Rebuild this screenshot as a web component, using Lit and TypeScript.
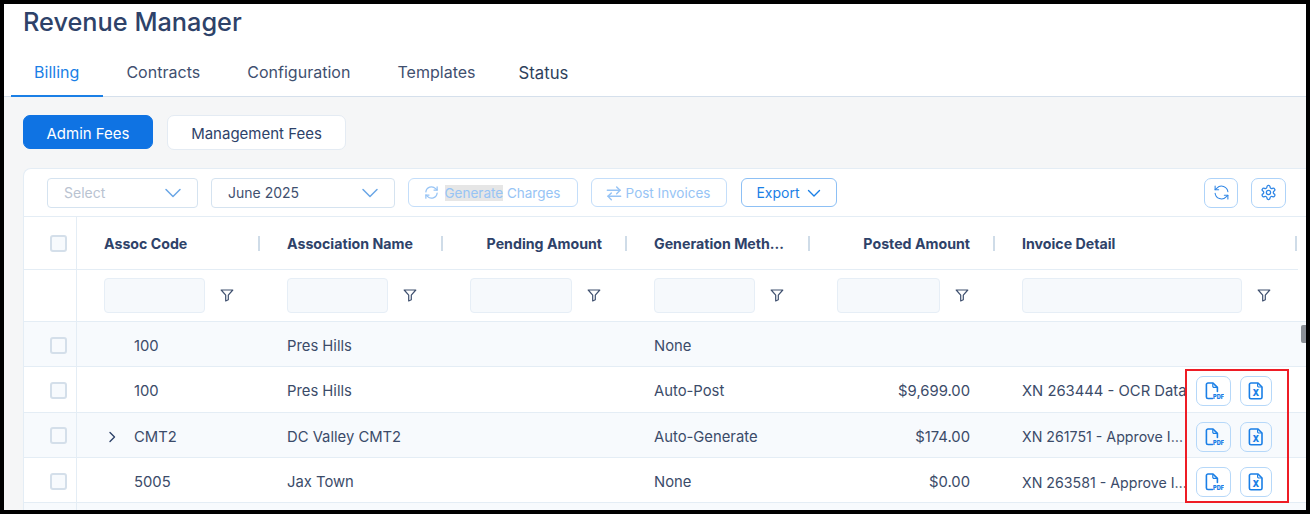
import { LitElement, html, css, svg } from "lit";
import { customElement } from "lit/decorators.js";

const syncIcon = (size: number, w = 2, mirror = false) => html`<svg width=${size} height=${size} viewBox="0 0 24 24" fill="none" stroke="currentColor" stroke-width=${w} stroke-linecap="round" stroke-linejoin="round" class=${mirror ? "mirror" : ""}><path d="M3 11a9 9 0 0 1 15.5-5.2L21 8"/><path d="M21 3v5h-5"/><path d="M21 13a9 9 0 0 1-15.5 5.2L3 16"/><path d="M3 21v-5h5"/></svg>`;
const swapIcon = html`<svg width="16" height="16" viewBox="0 0 24 24" fill="none" stroke="currentColor" stroke-width="2.2" stroke-linecap="round" stroke-linejoin="round"><path d="M2 8h19"/><path d="M16 3l5 5-5 5" /><path d="M22 17H3"/><path d="M8 12l-5 5 5 5"/></svg>`;
const chevron = html`<svg width="18" height="18" viewBox="0 0 18 18" fill="none" stroke="currentColor" stroke-width="1.5" stroke-linecap="round" stroke-linejoin="round"><path d="M2 5.5l7 7 7-7"/></svg>`;
const chevronSmall = html`<svg width="14" height="14" viewBox="0 0 14 14" fill="none" stroke="currentColor" stroke-width="1.4" stroke-linecap="round" stroke-linejoin="round"><path d="M1.5 4.5L7 10l5.5-5.5"/></svg>`;
const gearIcon = html`<svg width="17" height="17" viewBox="0 0 24 24" fill="none" stroke="currentColor" stroke-width="1.8" stroke-linecap="round" stroke-linejoin="round"><path d="M12.2 2h-.4a2 2 0 0 0-2 2v.2a2 2 0 0 1-1 1.7l-.4.3a2 2 0 0 1-2 0l-.2-.1a2 2 0 0 0-2.7.7l-.2.4a2 2 0 0 0 .7 2.7l.2.1a2 2 0 0 1 1 1.7v.5a2 2 0 0 1-1 1.7l-.2.1a2 2 0 0 0-.7 2.7l.2.4a2 2 0 0 0 2.7.7l.2-.1a2 2 0 0 1 2 0l.4.3a2 2 0 0 1 1 1.7v.2a2 2 0 0 0 2 2h.4a2 2 0 0 0 2-2v-.2a2 2 0 0 1 1-1.7l.4-.3a2 2 0 0 1 2 0l.2.1a2 2 0 0 0 2.7-.7l.2-.4a2 2 0 0 0-.7-2.7l-.2-.1a2 2 0 0 1-1-1.7v-.5a2 2 0 0 1 1-1.7l.2-.1a2 2 0 0 0 .7-2.7l-.2-.4a2 2 0 0 0-2.7-.7l-.2.1a2 2 0 0 1-2 0l-.4-.3a2 2 0 0 1-1-1.7V4a2 2 0 0 0-2-2z"/><circle cx="12" cy="12" r="3"/></svg>`;
const filterIcon = html`<svg class="filter" width="14" height="14" viewBox="0 0 14 14" fill="none" stroke="currentColor" stroke-width="1.2" stroke-linejoin="round"><path d="M1.2 2h11.6L8.3 7.2v4.6L5.7 13V7.2z"/></svg>`;
const pdfIcon = html`<svg width="20" height="20" viewBox="0 0 20 20" fill="none"><path d="M8.5 17.5H4a1.6 1.6 0 0 1-1.6-1.6V3.6A1.6 1.6 0 0 1 4 2h5l4.4 4.4v4" stroke="currentColor" stroke-width="1.6" stroke-linecap="round" stroke-linejoin="round"/><path d="M8.8 2.2v3a1.2 1.2 0 0 0 1.2 1.2h3.2" stroke="currentColor" stroke-width="1.2"/>${svg`<text x="9" y="17.8" font-family="Inter, sans-serif" font-size="5.6" font-weight="900" fill="currentColor">PDF</text>`}</svg>`;
const xlsIcon = html`<svg width="18" height="20" viewBox="0 0 18 20" fill="none"><path d="M4 2h7l4 4v10.2a1.6 1.6 0 0 1-1.6 1.6H4a1.6 1.6 0 0 1-1.6-1.6V3.6A1.6 1.6 0 0 1 4 2z" stroke="currentColor" stroke-width="1.6" stroke-linejoin="round"/><path d="M10.6 2.2v2.6a1.2 1.2 0 0 0 1.2 1.2h3" stroke="currentColor" stroke-width="1.2"/>${svg`<text x="8.8" y="14.6" text-anchor="middle" font-family="Inter, sans-serif" font-size="8.5" font-weight="900" fill="currentColor">X</text>`}</svg>`;

interface Column { label: string; right?: boolean; }
const columns: Column[] = [
  { label: "Assoc Code" },
  { label: "Association Name" },
  { label: "Pending Amount", right: true },
  { label: "Generation Meth…" },
  { label: "Posted Amount", right: true },
  { label: "Invoice Detail" },
];

interface Row { code: string; expand?: boolean; name: string; pending?: string; method: string; posted: string; invoice: string; actions: boolean; }
const rows: Row[] = [
  { code: "100", name: "Pres Hills", method: "None", posted: "", invoice: "", actions: false },
  { code: "100", name: "Pres Hills", method: "Auto-Post", posted: "$9,699.00", invoice: "XN 263444 - OCR Data", actions: true },
  { code: "CMT2", expand: true, name: "DC Valley CMT2", method: "Auto-Generate", posted: "$174.00", invoice: "XN 261751 - Approve I…", actions: true },
  { code: "5005", name: "Jax Town", method: "None", posted: "$0.00", invoice: "XN 263581 - Approve I…", actions: true },
  { code: "", name: "", method: "", posted: "", invoice: "", actions: false },
];

@customElement("app-root")
export class AppRoot extends LitElement {
  static styles = css`
    :host { display: block; width: 1310px; height: 514px; box-sizing: border-box; padding: 4px; background: #000; overflow: hidden; font-family: Inter, "Liberation Sans", sans-serif; color: #3b4b69; }
    * { box-sizing: border-box; }
    .mirror { transform: scaleX(-1); }
    .page { width: 1302px; height: 506px; background: #f5f6f7; overflow: hidden; position: relative; }
    header { background: #fff; height: 93px; border-bottom: 1px solid #d5e0ec; }
    h1 { margin: 0; padding: 3px 0 0 19px; font-size: 25.3px; line-height: 30px; font-weight: 500; color: #2e4269; }
    .tabs { display: flex; margin: 21px 0 0 6.5px; }
    .tab { padding: 0 23.5px; height: 39px; line-height: 29px; font-size: 16px; letter-spacing: 0.02px; color: #3f506f; border-bottom: 2px solid transparent; }
    .tab.active { color: #1a7fe6; border-bottom-color: #1a7fe6; }
    .tab.status { font-size: 16.7px; color: #2e3f5c; margin-left: -4px; line-height: 31px; }
    .fees { display: flex; gap: 14px; padding: 18px 0 0 19px; }
    .fee { height: 35px; border-radius: 7px; font-size: 15px; display: flex; align-items: center; justify-content: center; padding-top: 1px; }
    .fee.on { width: 130px; background: #0f73e3; color: #fff; border: 1px solid #0f73e3; height: 34px; padding-top: 2px; }
    .fee.off { width: 179px; background: #fff; border: 1px solid #e4ebf3; color: #2e4269; }
    .card { margin: 18px 0 0 19px; background: #fff; border: 1px solid #e4edf5; border-right: 0; border-radius: 8px 0 0 0; height: 400px; }
    .toolbar { height: 48px; display: flex; align-items: center; padding-left: 23px; border-bottom: 1px solid #e4edf5; }
    .select { height: 30px; border: 1px solid #d5e3f0; border-radius: 4px; display: flex; align-items: center; justify-content: space-between; font-size: 14px; padding: 0 15px 0 16px; color: #b9c3d1; }
    .select svg { color: #6aa6e6; }
    .select.a { width: 151px; }
    .select.b { width: 184px; margin-left: 13px; color: #3f506f; }
    .btn { height: 29px; display: flex; align-items: center; gap: 6px; border: 1px solid #c4defa; border-radius: 6px; font-size: 13.5px; color: #97c4f5; background: #fff; justify-content: center; }
    .btn.gen { width: 170px; margin-left: 13px; padding-right: 2px; }
    .btn.post { width: 136px; margin-left: 13px; gap: 4px; padding-right: 2px; }
    .btn.export { width: 96px; margin-left: 14px; color: #1a7fe6; border-color: #8dc0f5; font-size: 14px; gap: 7px; padding-right: 1px; }
    .sel { background: #e6e6e6; color: #97c4f5; }
    .icon-btn { height: 30px; border: 1px solid #aed3f9; border-radius: 7px; display: flex; align-items: center; justify-content: center; color: #2f86e6; }
    .icon-btn.a { width: 34px; }
    .icon-btn.b { width: 35px; }
    .right-tools { display: flex; gap: 13px; margin-left: auto; margin-right: 20px; }
    .grid { display: grid; grid-template-columns: 53px 183px 183px 184px 183px 185px 302px; width: 1273px; }
    .head { height: 53px; border-bottom: 1px solid #e4edf5; width: 1274px; }
    .filters { height: 51px; }
    .cellbox { border-right: 1px solid #e4edf5; display: flex; align-items: center; padding-left: 26px; }
    .row .cellbox { padding-top: 2px; }
    .hcell { display: flex; align-items: center; padding: 0 0 0 27px; font-size: 14.2px; font-weight: 700; color: #2e4269; position: relative; white-space: nowrap; }
    .hcell.r { justify-content: flex-end; padding: 0 25px 0 0; }
    .hcell .sep { position: absolute; right: 0; top: 19px; width: 2px; height: 15px; background: #cfdce8; }
    .fcell { display: flex; align-items: center; padding-left: 27px; }
    .finput { width: calc(100% - 55px); height: 35px; background: #f6f9fc; border: 1px solid #e6eef6; border-radius: 4px; flex: none; }
    .fcell.wide .finput { width: 220px; }
    .filter { margin: 0 0 2px 15px; color: #3f506f; flex: none; }
    .body { border-top: 1px solid #e4edf5; position: relative; width: 1283px; }
    .row { height: 45.33px; border-bottom: 1px solid #e4edf5; width: 1283px; font-size: 14.8px; color: #3b4b69; }
    .row:nth-child(odd) { background: #f7fafd; }
    .cell { display: flex; align-items: center; padding: 4px 0 0 27px; min-width: 0; white-space: nowrap; }
    .cell.r { justify-content: flex-end; padding: 4px 25px 0 0; }
    .chk { width: 17px; height: 17px; border: 2px solid #d4dfea; border-radius: 3px; background: #f7fafd; }
    .slot { width: 30px; flex: none; color: #2e4269; display: flex; align-items: center; padding-left: 3px; }
    .inv { width: 164px; flex: none; }
    .inv.trim { font-size: 14.2px; }
    .actions { display: flex; gap: 9px; margin-left: 10px; }
    .act { height: 30px; border: 1px solid #b6d8f9; border-radius: 7px; display: flex; align-items: center; justify-content: center; color: #1a7fe6; }
    .act.p { width: 35px; }
    .act.x { width: 32px; }
    .mark { position: absolute; left: 1161px; top: 47px; width: 104px; height: 134px; border: 2px solid #ee1c25; pointer-events: none; }
    .thumb { position: absolute; left: 1297px; top: 321px; width: 5px; height: 18px; background: #8a8f96; border-radius: 2px 0 0 2px; }
  `;

  render() {
    return html`
      <div class="page">
        <header>
          <h1>Revenue Manager</h1>
          <nav class="tabs">
            <div class="tab active">Billing</div>
            <div class="tab">Contracts</div>
            <div class="tab">Configuration</div>
            <div class="tab">Templates</div>
            <div class="tab status">Status</div>
          </nav>
        </header>
        <div class="fees">
          <div class="fee on">Admin Fees</div>
          <div class="fee off">Management Fees</div>
        </div>
        <section class="card">
          <div class="toolbar">
            <div class="select a"><span>Select</span>${chevron}</div>
            <div class="select b"><span>June 2025</span>${chevron}</div>
            <div class="btn gen">${syncIcon(15)}<span><span class="sel">Generate</span> Charges</span></div>
            <div class="btn post">${swapIcon}<span>Post Invoices</span></div>
            <div class="btn export"><span>Export</span>${chevronSmall}</div>
            <div class="right-tools">
              <div class="icon-btn a">${syncIcon(17, 1.5, true)}</div>
              <div class="icon-btn b">${gearIcon}</div>
            </div>
          </div>
          <div class="grid head">
            <div class="cellbox"><div class="chk"></div></div>
            ${columns.map((c) => html`<div class="hcell ${c.right ? "r" : ""}">${c.label}<span class="sep"></span></div>`)}
          </div>
          <div class="grid filters">
            <div class="cellbox"></div>
            ${columns.map((_, i) => html`<div class="fcell ${i === 5 ? "wide" : ""}"><div class="finput"></div>${filterIcon}</div>`)}
          </div>
          <div class="body">
            ${rows.map((r) => html`
              <div class="grid row">
                <div class="cellbox"><div class="chk"></div></div>
                <div class="cell"><span class="slot">${r.expand ? html`<svg width="10" height="12" viewBox="0 0 10 12" fill="none" stroke="currentColor" stroke-width="1.4" stroke-linecap="round" stroke-linejoin="round"><path d="M3 1.5L7.5 6 3 10.5"/></svg>` : ""}</span>${r.code}</div>
                <div class="cell">${r.name}</div>
                <div class="cell r">${r.pending ?? ""}</div>
                <div class="cell">${r.method}</div>
                <div class="cell r">${r.posted}</div>
                <div class="cell">
                  <span class="inv ${r.invoice.endsWith("…") ? "trim" : ""}">${r.invoice}</span>
                  ${r.actions ? html`<div class="actions"><div class="act p">${pdfIcon}</div><div class="act x">${xlsIcon}</div></div>` : ""}
                </div>
              </div>`)}
            <div class="mark"></div>
          </div>
        </section>
        <div class="thumb"></div>
      </div>
    `;
  }
}
